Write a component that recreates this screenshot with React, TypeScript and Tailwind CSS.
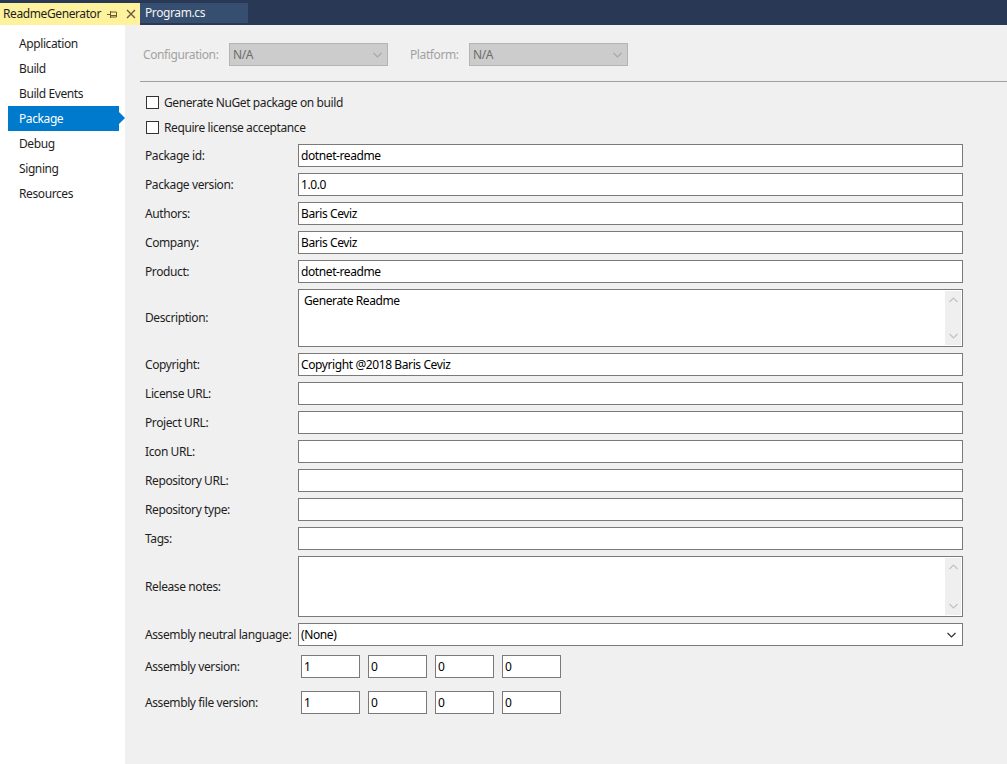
import React from "react"

const font = { fontFamily: '"Noto Sans", "Segoe UI", sans-serif' }

function Chevron({ className, up }: { className?: string; up?: boolean }) {
  return (
    <svg width="9" height="6" viewBox="0 0 9 6" className={className}>
      <path
        d={up ? "M0.5 5 L4.5 1 L8.5 5" : "M0.5 1 L4.5 5 L8.5 1"}
        fill="none"
        stroke="currentColor"
        strokeWidth="1.2"
      />
    </svg>
  )
}

function TextBox({ value = "" }: { value?: string }) {
  return (
    <div className="w-[665px] h-[23px] border border-[#7a7a7a] bg-white flex items-center pl-[2px] text-[12px] text-black">
      {value}
    </div>
  )
}

function TextArea({ value = "", height }: { value?: string; height: string }) {
  return (
    <div className={`w-[665px] ${height} border border-[#7a7a7a] bg-white flex`}>
      <div className="flex-1 pl-[5px] pt-[2px] text-[12px] text-black">{value}</div>
      <div className="w-[16px] my-[1px] mr-[1px] bg-[#efefef] flex flex-col items-center justify-between py-[6px] text-[#c2c2c2]">
        <Chevron up />
        <Chevron />
      </div>
    </div>
  )
}

function Row({ label, children, className = "" }: { label: string; children: React.ReactNode; className?: string }) {
  return (
    <div className={`flex items-center ${className}`}>
      <div className="w-[153px] shrink-0 whitespace-nowrap text-[12px] text-[#1e1e1e]">{label}</div>
      {children}
    </div>
  )
}

function VersionBoxes({ values }: { values: string[] }) {
  return (
    <div className="flex gap-[8px] ml-[3px]">
      {values.map((v, i) => (
        <div
          key={i}
          className="w-[59px] h-[23px] border border-[#7a7a7a] bg-white flex items-center pl-[2px] text-[12px] text-black"
        >
          {v}
        </div>
      ))}
    </div>
  )
}

function Checkbox({ label }: { label: string }) {
  return (
    <div className="h-[25px] flex items-center">
      <div className="w-[13px] h-[13px] border border-[#333333] bg-white ml-[1px]" />
      <span className="ml-[5px] text-[12px] text-[#1e1e1e]">{label}</span>
    </div>
  )
}

export default function App() {
  const nav = ["Application", "Build", "Build Events", "Package", "Debug", "Signing", "Resources"]

  return (
    <div className="w-[1007px] h-[764px] flex flex-col overflow-hidden tracking-[-0.4px]" style={font}>
      {/* Document tabs */}
      <div className="h-[25px] bg-[#293955] flex items-end shrink-0">
        <div className="h-[22px] w-[140px] shrink-0 bg-[#fff29d] flex items-center pl-[3px] text-[12px] text-[#1e1e1e] whitespace-nowrap">
          <span className="w-[100px]">ReadmeGenerator</span>
          <svg width="11" height="9" viewBox="0 0 11 9" className="ml-[4px] shrink-0 text-[#6b5a35]">
            <path d="M0 4.5 H3.5 M3.5 1 V8 M3.5 2 H9.5 V7 H3.5 M3.5 5.5 H9.5" fill="none" stroke="currentColor" strokeWidth="1" />
          </svg>
          <svg width="10" height="10" viewBox="0 0 10 10" className="ml-[8px] shrink-0 text-[#6b5a35]">
            <path d="M1 1 L9 9 M9 1 L1 9" stroke="currentColor" strokeWidth="1.4" />
          </svg>
        </div>
        <div className="h-[20px] w-[108px] shrink-0 bg-[#364e6f] mb-[2px] flex items-center pl-[5px] text-[12px] text-[#f2f2f2]">
          Program.cs
        </div>
      </div>

      <div className="flex flex-1">
        {/* Left navigation */}
        <div className="w-[125px] bg-white pt-[6px] shrink-0">
          {nav.map((item) =>
            item === "Package" ? (
              <div key={item} className="relative ml-[8px] w-[111px] h-[25px] bg-[#007acc] flex items-center pl-[11px] text-[12px] text-white">
                {item}
                <div className="absolute right-[-6px] top-[6px] w-0 h-0 border-y-[6px] border-y-transparent border-l-[6px] border-l-[#007acc]" />
              </div>
            ) : (
              <div key={item} className="ml-[8px] h-[25px] flex items-center pl-[11px] text-[12px] text-[#1e1e1e]">
                {item}
              </div>
            )
          )}
        </div>

        {/* Package page */}
        <div className="flex-1 bg-[#f0f0f0]">
          <div className="flex items-center pl-[18px] pt-[18px] text-[12px]">
            <div className="w-[86px] text-[#a2a2a2]">Configuration:</div>
            <div className="w-[159px] h-[23px] bg-[#cccccc] border border-[#b4b4b4] flex items-center justify-between pl-[3px] pr-[5px] text-[#6d6d6d]">
              N/A
              <Chevron className="text-[#a8a8a8]" />
            </div>
            <div className="ml-[22px] w-[59px] text-[#a2a2a2]">Platform:</div>
            <div className="w-[159px] h-[23px] bg-[#cccccc] border border-[#b4b4b4] flex items-center justify-between pl-[3px] pr-[5px] text-[#6d6d6d]">
              N/A
              <Chevron className="text-[#a8a8a8]" />
            </div>
          </div>

          <div className="ml-[15px] mt-[15px] h-px bg-[#a0a0a0]" />

          <div className="pl-[20px] pt-[8px]">
            <Checkbox label="Generate NuGet package on build" />
            <Checkbox label="Require license acceptance" />

            <div className="mt-[4px] flex flex-col gap-[6px]">
              <Row label="Package id:"><TextBox value="dotnet-readme" /></Row>
              <Row label="Package version:"><TextBox value="1.0.0" /></Row>
              <Row label="Authors:"><TextBox value="Baris Ceviz" /></Row>
              <Row label="Company:"><TextBox value="Baris Ceviz" /></Row>
              <Row label="Product:"><TextBox value="dotnet-readme" /></Row>
              <Row label="Description:"><TextArea value="Generate Readme" height="h-[58px]" /></Row>
              <Row label="Copyright:"><TextBox value="Copyright @2018 Baris Ceviz" /></Row>
              <Row label="License URL:"><TextBox /></Row>
              <Row label="Project URL:"><TextBox /></Row>
              <Row label="Icon URL:"><TextBox /></Row>
              <Row label="Repository URL:"><TextBox /></Row>
              <Row label="Repository type:"><TextBox /></Row>
              <Row label="Tags:"><TextBox /></Row>
              <Row label="Release notes:"><TextArea height="h-[61px]" /></Row>
              <Row label="Assembly neutral language:">
                <div className="w-[665px] h-[23px] border border-[#7a7a7a] bg-white flex items-center justify-between pl-[2px] pr-[6px] text-[12px] text-black">
                  (None)
                  <Chevron className="text-[#333333]" />
                </div>
              </Row>
            </div>

            <Row label="Assembly version:" className="mt-[9px]">
              <VersionBoxes values={["1", "0", "0", "0"]} />
            </Row>
            <Row label="Assembly file version:" className="mt-[13px]">
              <VersionBoxes values={["1", "0", "0", "0"]} />
            </Row>
          </div>
        </div>
      </div>
    </div>
  )
}
